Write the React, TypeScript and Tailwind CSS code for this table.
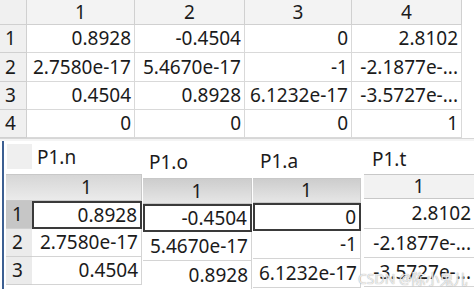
import React from "react";

const font = { fontFamily: '"Noto Sans", "Open Sans", "Noto Sans CJK SC", sans-serif' };

const topRows = [
  ["0.8928", "-0.4504", "0", "2.8102"],
  ["2.7580e-17", "5.4670e-17", "-1", "-2.1877e-..."],
  ["0.4504", "0.8928", "6.1232e-17", "-3.5727e-..."],
  ["0", "0", "0", "1"],
];
const topRowH = ["h-[28px]", "h-[29px]", "h-[28px]", "h-[28px]"];

function TopTable() {
  return (
    <div className="grid w-[462px] grid-cols-[27px_108px_110px_107px_110px] text-[19px] text-[#1b1b1b]">
      <div className="h-[25px] border-r border-b border-[#d0d0d0] bg-[#f0f0f0]" />
      {["1", "2", "3", "4"].map((h) => (
        <div
          key={h}
          className="flex h-[25px] items-center justify-center border-r border-b border-[#d0d0d0] bg-[#f3f3f3]"
        >
          {h}
        </div>
      ))}
      {topRows.map((row, i) => (
        <React.Fragment key={i}>
          <div
            className={`flex ${topRowH[i]} items-center border-r border-b border-[#d0d0d0] bg-[#f0f0f0] pl-[5px]`}
          >
            {i + 1}
          </div>
          {row.map((v, j) => (
            <div
              key={j}
              className={`flex ${topRowH[i]} items-center justify-end overflow-hidden whitespace-nowrap border-r border-b border-[#d9d9d9] bg-white pr-[3px]`}
            >
              {v}
            </div>
          ))}
        </React.Fragment>
      ))}
    </div>
  );
}

type PanelProps = {
  title: string;
  values: string[];
  width: string;
  titleTop: string;
  titleH: string;
  titlePl: string;
  headerH: string;
  headerBg: string;
  rowHs: string[];
  rowHeader?: boolean;
  selected?: boolean;
  topPad: string;
};

function Panel({
  title,
  values,
  width,
  titleTop,
  titleH,
  titlePl,
  headerH,
  headerBg,
  rowHs,
  rowHeader,
  selected,
  topPad,
}: PanelProps) {
  return (
    <div className={`flex ${width} shrink-0 flex-col bg-white ${topPad}`}>
      <div className={`flex ${titleH} items-start`}>
        {rowHeader ? <div className="ml-[1px] h-[25px] w-[25px] bg-[#efefef]" /> : null}
        <div className={`${titleTop} ${titlePl} leading-[26px]`}>{title}</div>
      </div>
      <div className="flex">
        {rowHeader ? (
          <div className={`${headerH} w-[26px] border-t border-b border-[#c8c8c8] ${headerBg}`} />
        ) : null}
        <div
          className={`flex ${headerH} flex-1 items-center justify-center border-t border-b border-r border-[#c8c8c8] ${headerBg}`}
        >
          1
        </div>
      </div>
      {values.map((v, i) => (
        <div key={i} className="flex">
          {rowHeader ? (
            <div
              className={`flex ${rowHs[i]} w-[26px] items-center border-b border-[#d0d0d0] pl-[6px] ${
                i === 0 ? "bg-[#c6c6c6]" : "bg-[#ebebeb]"
              }`}
            >
              {i + 1}
            </div>
          ) : null}
          <div
            className={`flex ${rowHs[i]} flex-1 items-center justify-end overflow-hidden whitespace-nowrap pr-[3px] ${
              selected && i === 0
                ? "border-2 border-[#3a3a3a]"
                : "border-r border-b border-[#d4d4d4]"
            }`}
          >
            {v}
          </div>
        </div>
      ))}
    </div>
  );
}

export default function App() {
  return (
    <div className="relative h-[289px] w-[474px] overflow-hidden bg-white text-[19px] text-[#1b1b1b]" style={font}>
      <TopTable />
      <div className="h-[3px] border-t border-[#d6d6d6] bg-[#f4f4f4]" />
      <div className="ml-[2px] flex h-[149px] items-start border-l-2 border-[#3c5f92] pl-[2px]">
        <Panel
          title="P1.n"
          values={["0.8928", "2.7580e-17", "0.4504"]}
          width="w-[136px]"
          topPad="pt-[3px]"
          titleTop="mt-0"
          titleH="h-[30px]"
          titlePl="pl-[5px]"
          headerH="h-[27px]"
          headerBg="bg-gradient-to-b from-[#d6d6d6] to-[#ebebeb]"
          rowHs={["h-[28px]", "h-[28px]", "h-[28px]"]}
          rowHeader
          selected
        />
        <Panel
          title="P1.o"
          values={["-0.4504", "5.4670e-17", "0.8928"]}
          width="w-[109px] ml-[1px]"
          topPad="pt-0"
          titleTop="mt-[8px]"
          titleH="h-[37px]"
          titlePl="pl-[6px]"
          headerH="h-[26px]"
          headerBg="bg-gradient-to-b from-[#cdcdcd] to-[#e6e6e6]"
          rowHs={["h-[28px]", "h-[29px]", "h-[29px]"]}
          selected
        />
        <Panel
          title="P1.a"
          values={["0", "-1", "6.1232e-17"]}
          width="w-[108px] ml-[1px]"
          topPad="pt-0"
          titleTop="mt-[7px]"
          titleH="h-[37px]"
          titlePl="pl-[7px]"
          headerH="h-[25px]"
          headerBg="bg-gradient-to-b from-[#cdcdcd] to-[#e6e6e6]"
          rowHs={["h-[28px]", "h-[28px]", "h-[29px]"]}
          selected
        />
        <Panel
          title="P1.t"
          values={["2.8102", "-2.1877e-...", "-3.5727e-..."]}
          width="w-[111px] ml-[3px]"
          topPad="pt-0"
          titleTop="mt-[5px]"
          titleH="h-[33px]"
          titlePl="pl-[8px]"
          headerH="h-[25px]"
          headerBg="bg-[#f2f2f2]"
          rowHs={["h-[30px]", "h-[29px]", "h-[29px]"]}
        />
      </div>
      <div className="pointer-events-none absolute left-[358px] top-[268px] text-[14px] text-white/80 [text-shadow:0_0_1px_#888]">
        CSDN @陈小鬼儿
      </div>
    </div>
  );
}
